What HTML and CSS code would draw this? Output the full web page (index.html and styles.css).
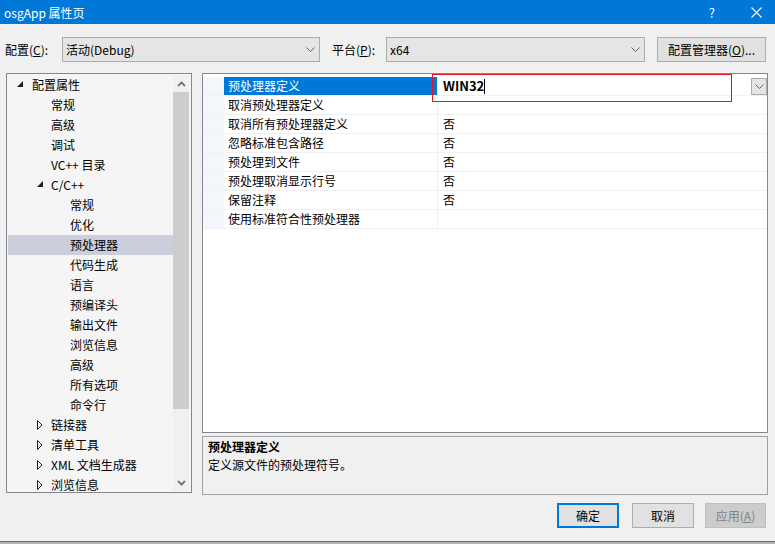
FILE: index.html
```html
<!DOCTYPE html>
<html lang="zh-CN">
<head>
    <meta charset="UTF-8">
    <title>osgApp 属性页</title>
    <link rel="stylesheet" href="styles.css">
</head>
<body>
    <div class="titlebar">
        <span class="title">osgApp 属性页</span>
        <span class="help">?</span>
        <svg class="close" width="11" height="11" viewBox="0 0 11 11"><path d="M0.5 0.5 L10.5 10.5 M10.5 0.5 L0.5 10.5" stroke="#fff" stroke-width="1.1" fill="none"/></svg>
    </div>

    <div class="toolbar">
        <label class="lbl-config">配置(<u>C</u>):</label>
        <div class="combo combo-config">
            <span>活动(Debug)</span>
            <svg width="9" height="5" viewBox="0 0 9 5"><polyline points="0.5,0.5 4.5,4.5 8.5,0.5" fill="none" stroke="#606060"/></svg>
        </div>
        <label class="lbl-platform">平台(<u>P</u>):</label>
        <div class="combo combo-platform">
            <span>x64</span>
            <svg width="9" height="5" viewBox="0 0 9 5"><polyline points="0.5,0.5 4.5,4.5 8.5,0.5" fill="none" stroke="#606060"/></svg>
        </div>
        <button class="btn btn-manager" type="button">配置管理器(<u>O</u>)...</button>
    </div>

    <div class="main">
        <div class="tree">
            <ul class="tree-list">
                <li class="lvl0"><span class="twisty"><svg width="7" height="7" viewBox="0 0 7 7"><polygon points="6,0 6,6 0,6" fill="#1e1e1e"/></svg></span>配置属性</li>
                <li class="lvl1"><span class="twisty"></span>常规</li>
                <li class="lvl1"><span class="twisty"></span>高级</li>
                <li class="lvl1"><span class="twisty"></span>调试</li>
                <li class="lvl1"><span class="twisty"></span>VC++ 目录</li>
                <li class="lvl1"><span class="twisty"><svg width="7" height="7" viewBox="0 0 7 7"><polygon points="6,0 6,6 0,6" fill="#1e1e1e"/></svg></span>C/C++</li>
                <li class="lvl2"><span class="twisty"></span>常规</li>
                <li class="lvl2"><span class="twisty"></span>优化</li>
                <li class="lvl2 selected"><span class="twisty"></span>预处理器</li>
                <li class="lvl2"><span class="twisty"></span>代码生成</li>
                <li class="lvl2"><span class="twisty"></span>语言</li>
                <li class="lvl2"><span class="twisty"></span>预编译头</li>
                <li class="lvl2"><span class="twisty"></span>输出文件</li>
                <li class="lvl2"><span class="twisty"></span>浏览信息</li>
                <li class="lvl2"><span class="twisty"></span>高级</li>
                <li class="lvl2"><span class="twisty"></span>所有选项</li>
                <li class="lvl2"><span class="twisty"></span>命令行</li>
                <li class="lvl1"><span class="twisty"><svg width="6" height="10" viewBox="0 0 6 10"><polygon points="0.5,0.5 5,5 0.5,9.5" fill="none" stroke="#1e1e1e"/></svg></span>链接器</li>
                <li class="lvl1"><span class="twisty"><svg width="6" height="10" viewBox="0 0 6 10"><polygon points="0.5,0.5 5,5 0.5,9.5" fill="none" stroke="#1e1e1e"/></svg></span>清单工具</li>
                <li class="lvl1"><span class="twisty"><svg width="6" height="10" viewBox="0 0 6 10"><polygon points="0.5,0.5 5,5 0.5,9.5" fill="none" stroke="#1e1e1e"/></svg></span>XML 文档生成器</li>
                <li class="lvl1"><span class="twisty"><svg width="6" height="10" viewBox="0 0 6 10"><polygon points="0.5,0.5 5,5 0.5,9.5" fill="none" stroke="#1e1e1e"/></svg></span>浏览信息</li>
            </ul>
            <div class="vscroll">
                <div class="arrow"><svg width="9" height="6" viewBox="0 0 9 6"><polyline points="1,5 4.5,1.5 8,5" fill="none" stroke="#606060" stroke-width="1.6"/></svg></div>
                <div class="thumb"></div>
                <div class="track"></div>
                <div class="arrow"><svg width="9" height="6" viewBox="0 0 9 6"><polyline points="1,1 4.5,4.5 8,1" fill="none" stroke="#606060" stroke-width="1.6"/></svg></div>
            </div>
        </div>

        <div class="right">
            <div class="grid">
                <div class="prop-row active">
                    <div class="gutter"></div>
                    <div class="pname">预处理器定义</div>
                    <div class="pval">
                        <span class="edit-text">WIN32</span><span class="caret"></span>
                        <span class="drop-btn"><svg width="9" height="5" viewBox="0 0 9 5"><polyline points="0.5,0.5 4.5,4.5 8.5,0.5" fill="none" stroke="#606060"/></svg></span>
                    </div>
                </div>
                <div class="prop-row"><div class="gutter"></div><div class="pname">取消预处理器定义</div><div class="pval"></div></div>
                <div class="prop-row"><div class="gutter"></div><div class="pname">取消所有预处理器定义</div><div class="pval">否</div></div>
                <div class="prop-row"><div class="gutter"></div><div class="pname">忽略标准包含路径</div><div class="pval">否</div></div>
                <div class="prop-row"><div class="gutter"></div><div class="pname">预处理到文件</div><div class="pval">否</div></div>
                <div class="prop-row"><div class="gutter"></div><div class="pname">预处理取消显示行号</div><div class="pval">否</div></div>
                <div class="prop-row"><div class="gutter"></div><div class="pname">保留注释</div><div class="pval">否</div></div>
                <div class="prop-row"><div class="gutter"></div><div class="pname">使用标准符合性预处理器</div><div class="pval"></div></div>
                <div class="highlight"></div>
            </div>
            <div class="desc">
                <div class="desc-title">预处理器定义</div>
                <div>定义源文件的预处理符号。</div>
            </div>
        </div>
    </div>

    <div class="footer">
        <button class="btn btn-ok" type="button">确定</button>
        <button class="btn btn-cancel" type="button">取消</button>
        <button class="btn btn-apply" type="button" disabled>应用(<u>A</u>)</button>
    </div>

    <div class="taskbar"></div>
</body>
</html>
```

FILE: styles.css
```css
body {
    margin: 0;
    width: 775px;
    height: 544px;
    overflow: hidden;
    background-color: #f0f0f0;
    font-family: "Noto Sans CJK SC", "Microsoft YaHei UI", sans-serif;
    font-size: 12px;
    color: #000;
    display: flex;
    flex-direction: column;
}

/* title bar */
.titlebar {
    height: 24px;
    flex: none;
    background-color: #0078d7;
    color: #fff;
    display: flex;
    align-items: center;
    padding-left: 4px;
}
.title {
    flex: 1;
    font-size: 12px;
}
.help {
    font-size: 13px;
    margin-right: 36px;
}
.close {
    margin-right: 13px;
}

/* configuration row */
.toolbar {
    display: flex;
    align-items: center;
    height: 25px;
    margin-top: 13px;
    padding-left: 5px;
    flex: none;
}
.lbl-config {
    width: 57px;
}
.lbl-platform {
    width: 54px;
    margin-left: 12px;
}
.combo {
    height: 25px;
    box-sizing: border-box;
    border: 1px solid #acacac;
    background-color: #e5e5e5;
    display: flex;
    align-items: center;
    justify-content: space-between;
    padding: 0 4px 0 3px;
}
.combo-config {
    width: 258px;
}
.combo-platform {
    width: 259px;
}
.btn {
    height: 25px;
    box-sizing: border-box;
    border: 1px solid #adadad;
    background-color: #e1e1e1;
    font-family: inherit;
    font-size: 12px;
    color: #000;
    padding: 0;
}
.btn-manager {
    width: 109px;
    margin-left: 12px;
}

/* main area */
.main {
    display: flex;
    margin-top: 11px;
    height: 422px;
    flex: none;
}
.tree {
    margin-left: 6px;
    width: 186px;
    height: 420px;
    box-sizing: border-box;
    border: 1px solid #828790;
    background-color: #f5f5f5;
    display: flex;
    padding: 1px 2px 1px 1px;
}
.tree-list {
    flex: 1;
    list-style: none;
    margin: 0;
    padding: 0;
    overflow: hidden;
}
.tree-list li {
    height: 20px;
    box-sizing: border-box;
    padding-bottom: 1px;
    line-height: 19px;
    display: flex;
    align-items: center;
    white-space: nowrap;
}
.tree-list li.selected {
    background-color: #cccedb;
}
.twisty {
    width: 19px;
    flex: none;
    display: flex;
    align-items: center;
}
.lvl0 {
    padding-left: 5px;
}
.lvl0 .twisty {
    padding-left: 4px;
    width: 15px;
}
.lvl1 {
    padding-left: 24px;
}
.lvl1 .twisty {
    padding-left: 5px;
    width: 14px;
}
.lvl2 {
    padding-left: 43px;
}
.vscroll {
    width: 16px;
    background-color: #f0f0f0;
    display: flex;
    flex-direction: column;
}
.vscroll .arrow {
    height: 17px;
    display: flex;
    align-items: center;
    justify-content: center;
}
.vscroll .thumb {
    height: 317px;
    background-color: #cdcdcd;
}
.vscroll .track {
    flex: 1;
}

/* property grid */
.right {
    margin-left: 10px;
    width: 566px;
    display: flex;
    flex-direction: column;
}
.grid {
    height: 360px;
    box-sizing: border-box;
    border: 1px solid #828790;
    background-color: #fff;
    padding-top: 3px;
    position: relative;
}
.prop-row {
    display: flex;
    height: 19px;
    line-height: 18px;
}
.gutter {
    width: 21px;
    background-color: #f3f6fb;
    border-bottom: 1px solid #eef1f6;
}
.pname {
    width: 209px;
    padding-left: 4px;
    border-bottom: 1px solid #f0f0f0;
    white-space: nowrap;
}
.pval {
    flex: 1;
    padding-left: 5px;
    border-left: 1px solid #f0f0f0;
    border-bottom: 1px solid #f0f0f0;
    display: flex;
    align-items: center;
}
.active .pname {
    background-color: #0078d7;
    color: #fff;
}
.edit-text {
    font-weight: bold;
    font-size: 13px;
}
.caret {
    width: 1px;
    height: 15px;
    background-color: #000;
}
.drop-btn {
    margin-left: auto;
    width: 16px;
    height: 17px;
    box-sizing: border-box;
    border: 1px solid #acacac;
    background-color: #e5e5e5;
    display: flex;
    align-items: center;
    justify-content: center;
}
.highlight {
    position: absolute;
    left: 229px;
    top: 0;
    width: 300px;
    height: 28px;
    box-sizing: border-box;
    border: 1px solid #e81123;
}

/* description */
.desc {
    margin-top: 3px;
    height: 59px;
    box-sizing: border-box;
    border: 1px solid #a0a0a0;
    padding: 1px 5px;
    line-height: 18px;
}
.desc-title {
    font-weight: bold;
}

/* dialog buttons */
.footer {
    display: flex;
    justify-content: flex-end;
    margin-top: 8px;
    padding-right: 9px;
    flex: none;
}
.btn-ok {
    width: 62px;
    border: 2px solid #0078d7;
}
.btn-cancel {
    width: 62px;
    margin-left: 13px;
}
.btn-apply {
    width: 61px;
    margin-left: 11px;
    background-color: #cccccc;
    border-color: #bfbfbf;
    color: #838383;
}

.taskbar {
    margin-top: auto;
    height: 3px;
    flex: none;
    box-sizing: border-box;
    border-top: 1px solid #2b79c2;
    background-color: #b4b4b4;
}
```
